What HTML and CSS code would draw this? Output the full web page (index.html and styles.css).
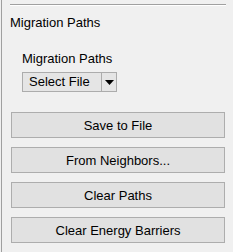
FILE: index.html
```html
<!DOCTYPE html>
<html lang="en">
<head>
  <meta charset="UTF-8">
  <title>Migration Paths</title>
  <link rel="stylesheet" href="styles.css">
</head>
<body>
  <div class="panel">
    <div class="separator"></div>
    <div class="section-title">Migration Paths</div>

    <div class="group">
      <div class="group-label">Migration Paths</div>
      <div class="combo">
        <span class="combo-text">Select File</span>
        <span class="combo-arrow"><svg width="9" height="5" viewBox="0 0 9 5"><path d="M0 0h9L4.5 5z" fill="#000"/></svg></span>
      </div>
    </div>

    <div class="buttons">
      <button class="btn">Save to File</button>
      <button class="btn">From Neighbors...</button>
      <button class="btn">Clear Paths</button>
      <button class="btn">Clear Energy Barriers</button>
      <div class="btn-stub"></div>
    </div>
  </div>
</body>
</html>
```

FILE: styles.css
```css
html, body {
  margin: 0;
  height: 100%;
  background: #f0f0f0;
  overflow: hidden;
}

body {
  font-family: "Liberation Sans", Arial, sans-serif;
  font-size: 13px;
  color: #000;
}

.panel {
  margin-left: 1px;
  height: 100%;
  box-sizing: border-box;
  border-left: 1px solid #a0a0a0;
  padding: 4px 7px 0 8px;
}

.separator {
  border-top: 1px solid #a0a0a0;
  border-bottom: 1px solid #fff;
}

.section-title {
  margin-top: 9px;
  line-height: 15px;
}

.group {
  padding-left: 12px;
  margin-top: 21px;
}

.group-label {
  line-height: 15px;
}

.combo {
  display: flex;
  margin-top: 6px;
  width: 93px;
  height: 18px;
  border: 1px solid #acacac;
  background: #e5e5e5;
}

.combo-text {
  flex: 1;
  padding-left: 6px;
  line-height: 18px;
  border-right: 1px solid #acacac;
}

.combo-arrow {
  width: 14px;
  display: flex;
  align-items: center;
  justify-content: center;
}

.buttons {
  margin-top: 20px;
  display: flex;
  flex-direction: column;
  gap: 9px;
  padding: 0 1px;
}

.btn {
  height: 26px;
  border: 1px solid #adadad;
  background: #e1e1e1;
  font-family: "Liberation Sans", Arial, sans-serif;
  font-size: 13px;
  color: #000;
  padding: 1px 0 0;
}

.btn-stub {
  height: 26px;
  border: 1px solid #adadad;
  background: #e1e1e1;
}
```
